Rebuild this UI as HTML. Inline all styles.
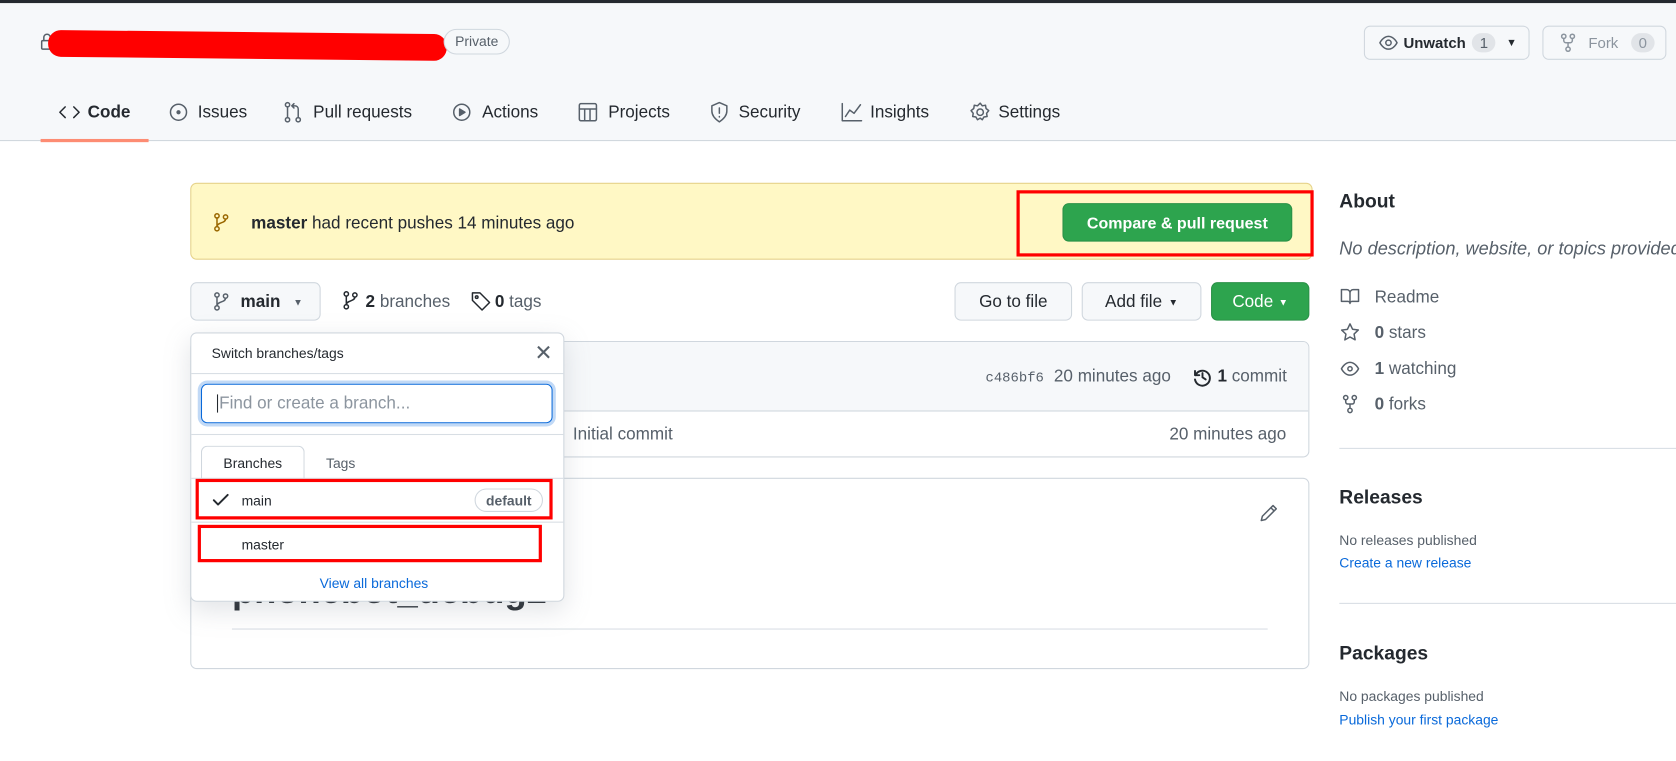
<!DOCTYPE html>
<html><head><meta charset="utf-8"><style>
*{box-sizing:border-box;margin:0;padding:0}
html,body{width:1676px;height:761px;overflow:hidden;background:#fff}
#w{position:absolute;left:0;top:0;width:1568px;height:712px;transform:scale(1.06888);transform-origin:0 0;font-family:"Liberation Sans",sans-serif;color:#24292f;font-size:14px}
.a{position:absolute;white-space:nowrap}
svg{position:absolute;fill:none;stroke:#57606a;stroke-width:1.4;stroke-linecap:round;stroke-linejoin:round}
.btn{position:absolute;border:1px solid #d0d7de;border-radius:6px;background:#f6f8fa;font-size:16px;display:flex;align-items:center;justify-content:center;font-weight:600}
.g{background:#2da44e;border-color:#2a9147;color:#fff}
.red{position:absolute;border:3px solid #f00}
.hr{position:absolute;height:1px;background:#d8dee4}
.side{font-size:16px;color:#57606a}
</style></head><body><div id="w">
<div class="a" style="left:0;top:0;width:1568px;height:3px;background:#24292f"></div>
<div class="a" style="left:0;top:3px;width:1568px;height:129px;background:#f6f8fa;border-bottom:1px solid #d0d7de"></div>
<svg style="left:37px;top:31px" width="14" height="16"><rect x="2" y="7" width="10" height="8" rx="1"/><path d="M4 7V4a3 3 0 016 0v3"/></svg>
<div class="a" style="left:45px;top:30px;width:373px;height:25px;background:#f00;border-radius:12px;transform:rotate(0.6deg)"></div>
<div class="a" style="left:415px;top:27px;width:62px;height:24px;border:1px solid #d0d7de;border-radius:12px;font-size:13px;color:#57606a;text-align:center;line-height:22px;background:#f6f8fa">Private</div>
<div class="btn" style="left:1276px;top:24px;width:155px;height:32px;font-size:14px;justify-content:flex-start;padding-left:14px;background:#f6f8fa"><span style="margin-left:22px">Unwatch</span><span style="background:#e1e4e8;border-radius:10px;padding:1px 7px;margin-left:6px;font-weight:500;color:#57606a">1</span><span style="margin-left:10px;font-size:10px">▼</span></div>
<svg style="left:1290px;top:32px" width="18" height="16"><path d="M1 8s3-6 8-6 8 6 8 6-3 6-8 6-8-6-8-6z"/><circle cx="9" cy="8" r="2.5"/></svg>
<div class="btn" style="left:1443px;top:24px;width:116px;height:32px;font-size:14px;color:#8c959f;justify-content:flex-start;padding-left:42px;font-weight:500">Fork<span style="background:#e1e4e8;border-radius:10px;padding:1px 7px;margin-left:12px;color:#8c959f">0</span></div>
<svg style="left:1459px;top:31px;stroke:#8c959f" width="16" height="18"><circle cx="4" cy="3" r="2"/><circle cx="12" cy="3" r="2"/><circle cx="8" cy="15" r="2"/><path d="M4 5v2a2 2 0 002 2h4a2 2 0 002-2V5M8 9v4"/></svg>
<div class="a" style="left:38px;top:130px;width:101px;height:3px;background:#fd8c73"></div>
<div class="a" style="top:97px;left:82px;font-size:16px;font-weight:600">Code</div>
<svg style="left:55px;top:97px;stroke:#24292f" width="20" height="16"><path d="M6 3L1 8l5 5M14 3l5 5-5 5"/></svg>
<div class="a" style="top:97px;left:185px;font-size:16px">Issues</div>
<svg style="left:158px;top:96px" width="18" height="18"><circle cx="9" cy="9" r="7.5"/><circle cx="9" cy="9" r="1.3" fill="#57606a"/></svg>
<div class="a" style="top:97px;left:293px;font-size:16px">Pull requests</div>
<svg style="left:265px;top:95px" width="18" height="20"><circle cx="4" cy="3" r="2"/><circle cx="4" cy="17" r="2"/><circle cx="14" cy="17" r="2"/><path d="M4 5v10M14 15V7a3 3 0 00-3-3H8M10 2L8 4l2 2"/></svg>
<div class="a" style="top:97px;left:451px;font-size:16px">Actions</div>
<svg style="left:423px;top:96px" width="18" height="18"><circle cx="9" cy="9" r="7.5"/><path d="M7 6l5 3-5 3z" fill="#57606a"/></svg>
<div class="a" style="top:97px;left:569px;font-size:16px">Projects</div>
<svg style="left:541px;top:96px" width="18" height="18"><rect x="1" y="1" width="16" height="16" rx="1.5"/><path d="M1 6h16M6 6v11M11 6v11"/></svg>
<div class="a" style="top:97px;left:691px;font-size:16px">Security</div>
<svg style="left:664px;top:95px" width="18" height="20"><path d="M9 1L2 4v5c0 5 4 8 7 10 3-2 7-5 7-10V4z"/><path d="M9 6v5M9 14v.5"/></svg>
<div class="a" style="top:97px;left:814px;font-size:16px">Insights</div>
<svg style="left:787px;top:96px" width="20" height="18"><path d="M1 1v16h18M4 13l4-6 4 3 6-8"/></svg>
<div class="a" style="top:97px;left:934px;font-size:16px">Settings</div>
<svg style="left:907px;top:95px" width="20" height="20"><circle cx="10" cy="10" r="3"/><path d="M10 1.5l2 2.5 3-.5.5 3 2.5 2-2 2.5.5 3-3 .5-1.5 2.5-2-1.5-2.5 1.5-1.5-2.5-3-.5.5-3-2-2.5 2.5-2 .5-3 3 .5z"/></svg>
<div class="a" style="left:178px;top:171px;width:1050px;height:72px;background:#fff8c5;border:1px solid #e6d28a;border-radius:6px"></div>
<svg style="left:199px;top:199px;stroke:#9a6700" width="16" height="18"><circle cx="4" cy="3" r="2"/><circle cx="12" cy="4" r="2"/><circle cx="4" cy="15" r="2"/><path d="M4 5v8M12 6c0 4-8 3-8 7"/></svg>
<div class="a" style="left:235px;top:201px;font-size:16px"><b>master</b> had recent pushes 14 minutes ago</div>
<div class="btn g" style="left:994px;top:190px;width:215px;height:36px;font-size:15px;padding-top:2px">Compare &amp; pull request</div>
<div class="red" style="left:951px;top:178px;width:278px;height:62px"></div>
<div class="btn" style="left:178px;top:264px;width:122px;height:36px;justify-content:flex-start;padding-left:46px;padding-top:2px">main<span style="font-size:9px;margin-left:12px;color:#57606a">▼</span></div>
<svg style="left:199px;top:273px" width="16" height="18"><circle cx="4" cy="3" r="2"/><circle cx="12" cy="4" r="2"/><circle cx="4" cy="15" r="2"/><path d="M4 5v8M12 6c0 4-8 3-8 7"/></svg>
<svg style="left:320px;top:272px;stroke:#24292f" width="16" height="18"><circle cx="4" cy="3" r="2"/><circle cx="12" cy="4" r="2"/><circle cx="4" cy="15" r="2"/><path d="M4 5v8M12 6c0 4-8 3-8 7"/></svg>
<div class="a" style="left:342px;top:274px;font-size:16px;color:#57606a"><b style="color:#24292f">2</b> branches</div>
<svg style="left:440px;top:272px;stroke:#24292f" width="20" height="20"><path d="M2 2h7l9 9-7 7-9-9z"/><circle cx="6" cy="6" r="1.2"/></svg>
<div class="a" style="left:463px;top:274px;font-size:16px;color:#57606a"><b style="color:#24292f">0</b> tags</div>
<div class="btn" style="left:893px;top:264px;width:110px;height:36px;font-weight:500;padding-top:2px">Go to file</div>
<div class="btn" style="left:1012px;top:264px;width:112px;height:36px;font-weight:500;padding-top:2px">Add file<span style="font-size:9px;margin-left:6px">▼</span></div>
<div class="btn g" style="left:1133px;top:264px;width:92px;height:36px;font-weight:500;padding-top:2px">Code<span style="font-size:9px;margin-left:5px">▼</span></div>
<div class="a" style="left:178px;top:319px;width:1047px;height:109px;border:1px solid #d0d7de;border-radius:6px;overflow:hidden"><div style="height:65px;background:#f6f8fa;border-bottom:1px solid #d0d7de"></div></div>
<div class="a" style="left:922px;top:346px;font-family:'Liberation Mono',monospace;font-size:13px;color:#57606a">c486bf6</div>
<div class="a" style="left:986px;top:344px;font-size:16px;color:#57606a">20 minutes ago</div>
<svg style="left:1115px;top:343px;stroke:#24292f;stroke-width:1.8" width="20" height="20"><path d="M3 4v4h4"/><path d="M3.5 8A7 7 0 1 1 3 12"/><path d="M10 6v4l3 2"/></svg>
<div class="a" style="left:1139px;top:344px;font-size:16px;color:#57606a"><b style="color:#24292f">1</b> commit</div>
<div class="a" style="left:536px;top:398px;font-size:16px;color:#57606a">Initial commit</div>
<div class="a" style="left:1094px;top:398px;font-size:16px;color:#57606a">20 minutes ago</div>
<div class="a" style="left:178px;top:447px;width:1047px;height:179px;border:1px solid #d0d7de;border-radius:6px"></div>
<svg style="left:1178px;top:471px;stroke:#57606a" width="18" height="18"><path d="M2 16l1-4L13 2l3 3L6 15z M11 4l3 3"/></svg>
<div class="a" style="left:217px;top:534px;font-size:34px;font-weight:600">phonebot_debug2</div>
<div class="hr" style="left:217px;top:588px;width:969px;background:#d8dee4"></div>
<div class="a" style="left:178px;top:311px;width:350px;height:252px;background:#fff;border:1px solid #d0d7de;border-radius:6px;box-shadow:0 8px 24px rgba(140,149,159,.25)"></div>
<div class="a" style="left:198px;top:323px;font-size:13px;font-weight:500">Switch branches/tags</div>
<div class="a" style="left:500px;top:318px;font-size:20px;color:#57606a">✕</div>
<div class="hr" style="left:179px;top:349px;width:348px"></div>
<div class="a" style="left:188px;top:359px;width:329px;height:37px;border:1px solid #0969da;border-radius:6px;box-shadow:0 0 0 3px rgba(9,105,218,.25);font-size:16px;color:#8c959f;padding:9px 0 0 14px"><span style="border-left:1px solid #24292f;padding-left:1px">Find or create a branch...</span></div>
<div class="hr" style="left:179px;top:406px;width:348px"></div>
<div class="a" style="left:188px;top:417px;width:97px;height:31px;border:1px solid #d0d7de;border-bottom:none;border-radius:6px 6px 0 0;background:#fff;font-size:13px;font-weight:500;text-align:center;line-height:32px">Branches</div>
<div class="a" style="left:305px;top:426px;font-size:13px;color:#57606a">Tags</div>
<div class="hr" style="left:179px;top:447px;width:348px"></div>
<svg style="left:199px;top:461px;stroke:#24292f;stroke-width:1.8" width="16" height="14"><path d="M1 7l4 4 9-9"/></svg>
<div class="a" style="left:226px;top:461px;font-size:13px;font-weight:500">main</div>
<div class="a" style="left:444px;top:457px;width:64px;height:22px;border:1px solid #d0d7de;border-radius:11px;font-size:13px;font-weight:600;color:#57606a;text-align:center;line-height:21px">default</div>
<div class="hr" style="left:179px;top:488px;width:348px"></div>
<div class="a" style="left:226px;top:502px;font-size:13px">master</div>
<div class="a" style="left:299px;top:538px;font-size:13px;color:#0969da">View all branches</div>
<div class="red" style="left:183px;top:448px;width:334px;height:38px"></div>
<div class="red" style="left:185px;top:491px;width:322px;height:35px"></div>
<div class="a" style="left:1253px;top:178px;font-size:18px;font-weight:600">About</div>
<div class="a side" style="left:1253px;top:223px;font-size:17px;font-style:italic">No description, website, or topics provided.</div>
<svg style="left:1254px;top:269px" width="18" height="16"><path d="M1 2h5a3 3 0 013 3v10a2 2 0 00-2-2H1zM17 2h-5a3 3 0 00-3 3v10a2 2 0 012-2h6z"/></svg>
<div class="a side" style="left:1286px;top:270px">Readme</div>
<svg style="left:1254px;top:302px" width="18" height="18"><path d="M9 1l2.4 5 5.4.7-4 3.8 1 5.4L9 13.3 4.2 16l1-5.4-4-3.8 5.4-.7z"/></svg>
<div class="a side" style="left:1286px;top:303px"><b style="color:#57606a">0</b> stars</div>
<svg style="left:1254px;top:337px" width="18" height="16"><path d="M1 8s3-6 8-6 8 6 8 6-3 6-8 6-8-6-8-6z"/><circle cx="9" cy="8" r="2"/></svg>
<div class="a side" style="left:1286px;top:337px"><b style="color:#57606a">1</b> watching</div>
<svg style="left:1255px;top:369px" width="16" height="18"><circle cx="4" cy="3" r="2"/><circle cx="12" cy="3" r="2"/><circle cx="8" cy="15" r="2"/><path d="M4 5v2a2 2 0 002 2h4a2 2 0 002-2V5M8 9v4"/></svg>
<div class="a side" style="left:1286px;top:370px"><b style="color:#57606a">0</b> forks</div>
<div class="hr" style="left:1253px;top:419px;width:315px"></div>
<div class="a" style="left:1253px;top:455px;font-size:18px;font-weight:600">Releases</div>
<div class="a" style="left:1253px;top:498px;font-size:13px;color:#57606a">No releases published</div>
<div class="a" style="left:1253px;top:519px;font-size:13px;color:#0969da">Create a new release</div>
<div class="hr" style="left:1253px;top:564px;width:315px"></div>
<div class="a" style="left:1253px;top:601px;font-size:18px;font-weight:600">Packages</div>
<div class="a" style="left:1253px;top:644px;font-size:13px;color:#57606a">No packages published</div>
<div class="a" style="left:1253px;top:666px;font-size:13px;color:#0969da">Publish your first package</div>
</div></body></html>
